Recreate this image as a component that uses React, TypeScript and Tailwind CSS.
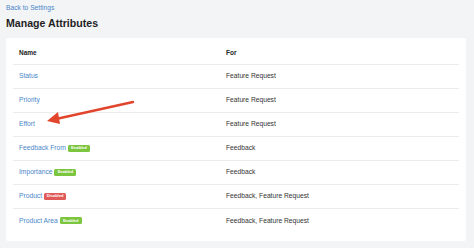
import React from 'react'

type Attr = {
  name: string
  forText: string
  badge?: 'Enabled' | 'Disabled'
}

const attributes: Attr[] = [
  { name: 'Status', forText: 'Feature Request' },
  { name: 'Priority', forText: 'Feature Request' },
  { name: 'Effort', forText: 'Feature Request' },
  { name: 'Feedback From', forText: 'Feedback', badge: 'Enabled' },
  { name: 'Importance', forText: 'Feedback', badge: 'Enabled' },
  { name: 'Product', forText: 'Feedback, Feature Request', badge: 'Disabled' },
  { name: 'Product Area', forText: 'Feedback, Feature Request', badge: 'Enabled' },
]

const Badge = ({ label }: { label: 'Enabled' | 'Disabled' }) => (
  <span
    className={`ml-[2px] inline-flex h-[7px] w-[22px] items-center justify-center rounded-[1.5px] text-[4px] font-bold leading-none text-white ${
      label === 'Enabled' ? 'bg-[#7cc63f]' : 'bg-[#e05a57]'
    }`}
  >
    {label}
  </span>
)

const App = () => {
  return (
    <div className="relative h-[248px] w-[474px] overflow-hidden bg-[#f3f4f6] font-['Liberation_Sans',Arial,sans-serif]">
      <div className="px-[6px] pt-[3px]">
        <a className="block text-[6.7px] leading-[10px] text-[#4a86c8]">Back to Settings</a>
        <h1 className="mt-[3px] text-[10.6px] font-bold leading-[15px] text-[#1f1f1f]">Manage Attributes</h1>
      </div>

      <div className="mt-[7px] ml-[6px] mr-[8px] rounded-[2px] bg-white px-[7px] pt-[4px] pb-[8px]">
        <div className="grid h-[23px] grid-cols-[213px_1fr] items-center border-b border-[#ececec] text-[6.5px] font-bold text-[#222]">
          <div className="pl-[6px]">Name</div>
          <div>For</div>
        </div>
        {attributes.map((a, i) => (
          <div
            key={a.name}
            className={`grid h-[24px] grid-cols-[213px_1fr] items-center ${
              i < attributes.length - 1 ? 'border-b border-[#ececec]' : ''
            }`}
          >
            <div className="flex items-center pl-[6px] text-[6.7px] text-[#4a86c8]">
              <span>{a.name}</span>
              {a.badge && <Badge label={a.badge} />}
            </div>
            <div className="text-[6.7px] text-[#333]">{a.forText}</div>
          </div>
        ))}
      </div>

      <svg className="pointer-events-none absolute left-0 top-0" width="474" height="248">
        <line x1="133" y1="102" x2="56" y2="119" stroke="#e1452c" strokeWidth="2.4" strokeLinecap="round" />
        <polygon points="47,121 58,112 60,124" fill="#e1452c" />
      </svg>
    </div>
  )
}

export default App
